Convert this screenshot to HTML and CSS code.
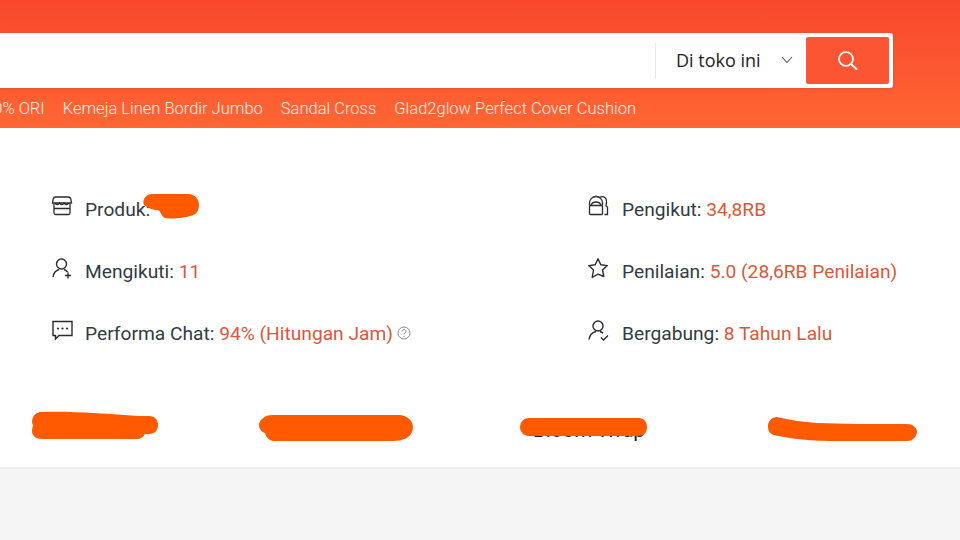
FILE: index.html
```html
<!DOCTYPE html>
<html lang="id">
<head>
<meta charset="utf-8">
<title>Toko</title>
<link rel="stylesheet" href="styles.css">
</head>
<body>
<header class="header">
  <div class="search">
    <div class="search-fill"></div>
    <div class="scope">
      <span class="scope-label">Di toko ini</span>
      <svg class="chev" width="12" height="8" viewBox="0 0 12 8"><path d="M1 1l5 5.500L11 1" fill="none" stroke="#555" stroke-width="1.100"/></svg>
    </div>
    <button class="search-btn" aria-label="Cari">
      <svg width="21" height="21" viewBox="0 0 21 21"><circle cx="9" cy="9" r="7" fill="none" stroke="#fff" stroke-width="1.700"/><path d="M14 14l5.500 5" stroke="#fff" stroke-width="1.800" stroke-linecap="round"/></svg>
    </button>
  </div>
  <nav class="suggest">
    <a class="first">100% ORI</a>
    <a>Kemeja Linen Bordir Jumbo</a>
    <a>Sandal Cross</a>
    <a>Glad2glow Perfect Cover Cushion</a>
  </nav>
</header>
<main class="panel">
  <section class="stats">
    <div class="stat">
      <svg class="ico" width="22" height="22" viewBox="0 0 22 22" fill="none" stroke="#2b2b2b" stroke-width="1.300"><path d="M4.500 2h13c1.500 0 2 .8 2.300 2l.7 4H1.500l.7-4c.3-1.200.8-2 2.300-2z"/><path d="M4 8c1 2 3.500 2 4.500 0 1 2 3.500 2 4.500 0 1 2 3.500 2 5 0"/><path d="M3 9v9c0 1 .5 1.500 1.500 1.500h13c1 0 1.500-.5 1.500-1.500V9M3 13.500h16"/></svg>
      <span>Produk:</span>
    </div>
    <div class="stat">
      <svg class="ico" width="22" height="22" viewBox="0 0 22 22" fill="none" stroke="#2b2b2b" stroke-width="1.300"><path d="M1.500 10.500V8a6.500 6.500 0 0 1 13 0v2.500"/><rect x="1.500" y="10.500" width="13" height="9" rx="1"/><path d="M3 10.500c.5-2 2.500-3.500 5-3.500s4.500 1.500 5 3.500"/><path d="M11.500 2.200c4.500-1.700 7.500 1 7 5l-.5 3.800 1.500 1v7.500h-3"/></svg>
      <span>Pengikut: <em>34,8RB</em></span>
    </div>
    <div class="stat">
      <svg class="ico" width="22" height="22" viewBox="0 0 22 22" fill="none" stroke="#2b2b2b" stroke-width="1.400"><circle cx="10.500" cy="7" r="5"/><path d="M2 20c.5-4 3-6.500 6-7.500M13 12.500c1.500.6 2.800 1.500 3.600 2.700"/><path d="M14 18.500h6M17 15.500v6"/></svg>
      <span>Mengikuti: <em>11</em></span>
    </div>
    <div class="stat">
      <svg class="ico" width="22" height="22" viewBox="0 0 22 22" fill="none" stroke="#2b2b2b" stroke-width="1.400"><path d="M10 1.800l2.800 6 6.500.8-4.800 4.400 1.300 6.500L10 17.200l-5.800 3.300L5.500 13 .7 8.600l6.500-.8z" stroke-linejoin="round"/></svg>
      <span>Penilaian: <em>5.0 (28,6RB Penilaian)</em></span>
    </div>
    <div class="stat">
      <svg class="ico" width="22" height="22" viewBox="0 0 22 22" fill="none" stroke="#2b2b2b" stroke-width="1.400"><path d="M2 2.500h19v14H8L4.500 20v-3.500H2z"/><circle cx="7" cy="9.500" r="1.100" fill="#2b2b2b" stroke="none"/><circle cx="11.500" cy="9.500" r="1.100" fill="#2b2b2b" stroke="none"/><circle cx="16" cy="9.500" r="1.100" fill="#2b2b2b" stroke="none"/></svg>
      <span>Performa Chat: <em>94% (Hitungan Jam)</em></span>
      <svg class="help" width="14" height="14" viewBox="0 0 14 14" fill="none" stroke="#8a8a8a" stroke-width="1"><circle cx="7" cy="7" r="6"/><path d="M5 5.500c0-2.500 4-2.500 4 0 0 1.500-2 1.500-2 3"/><circle cx="7" cy="10.300" r=".6" fill="#8a8a8a" stroke="none"/></svg>
    </div>
    <div class="stat">
      <svg class="ico" width="22" height="22" viewBox="0 0 22 22" fill="none" stroke="#2b2b2b" stroke-width="1.400"><circle cx="10" cy="7" r="5"/><path d="M1 20.500c.5-4 3-7 7-8M12 12.500c1.200.4 2.200 1 3 1.800"/><path d="M13 18.500l2.500 2.500 4.500-4.500"/></svg>
      <span>Bergabung: <em>8 Tahun Lalu</em></span>
    </div>
  </section>
  <section class="tabs">
    <span class="tab tab-a"></span>
    <span class="tab tab-b"></span>
    <span class="tab tab-c">Bloom Wrap</span>
    <span class="tab tab-d"></span>
  </section>
</main>
<div class="page-rest"></div>
<svg class="scribbles" width="960" height="540" viewBox="0 0 960 540" fill="#ff5a00" aria-hidden="true">
  <path d="M152 194h36c7 0 11 5 11 11 0 6-3 10-9 11-6 2-22 4-27 1-2-3-3-6-5-7-6 0-9-2-14-5-2-4 1-11 8-11z"/>
  <path d="M42 412c30-1 65 2 96 4h11c6 0 9 4 9 9s-3 9-9 9h-4c-2 3-4 5-9 5H42c-6 0-10-3-10-8 0-3 1-4 1-6-2-3-1-13 9-13z"/>
  <path d="M272 415h127c8 0 14 6 14 12 0 4-2 8-5 10-4 3-10 4-18 4H274c-5 0-8-4-9-8-4-1-6-5-6-8 0-5 6-10 13-10z"/>
  <path d="M529 418h110c5 0 8 4 8 9s-3 9-8 9H529c-5 0-9-4-9-9s4-9 9-9z"/>
  <path d="M777 417c12 3 25 5 40 6 25 1 55 1 90 1 6 0 10 4 10 8s-4 9-10 9h-70c-20 0-40-1-58-5-10-1-11-5-11-10 0-5 4-9 9-9z"/>
</svg>
</body>
</html>
```

FILE: styles.css
```css
* { box-sizing: border-box; }
html, body { margin: 0; padding: 0; }
body {
  position: relative;
  width: 960px;
  height: 540px;
  overflow: hidden;
  background: #f5f5f5;
  font-family: Roboto, "Liberation Sans", sans-serif;
}
.header {
  height: 128px;
  padding-top: 33px;
  background: linear-gradient(180deg, #f9482e, #ff6633);
  overflow: hidden;
}
.search {
  display: flex;
  align-items: center;
  width: 893px;
  height: 55px;
  padding-right: 4px;
  background: #fff;
  border-radius: 0 3px 3px 0;
  box-shadow: 0 1px 3px rgba(0, 0, 0, .1);
}
.search-fill { flex: 1; }
.scope {
  display: flex;
  align-items: center;
  width: 151px;
  height: 36px;
  padding-left: 20px;
  border-left: 1px solid #e8e8e8;
}
.scope-label {
  margin-top: -2px;
  font-family: "Open Sans", sans-serif;
  font-size: 18px;
  color: #222;
}
.chev { margin-left: 20px; margin-top: -1px; }
.search-btn {
  display: flex;
  align-items: center;
  justify-content: center;
  width: 83px;
  height: 47px;
  padding: 0;
  border: 0;
  border-radius: 2px;
  background: #fb5533;
}
.suggest {
  display: flex;
  gap: 18px;
  margin-top: 8px;
  margin-left: -25px;
  padding-top: 1px;
  font-size: 16.5px;
  font-weight: 300;
  line-height: 24px;
  white-space: nowrap;
  color: #fff0e8;
}
.panel {
  height: 341px;
  padding-top: 50px;
  background: #fff;
  border-bottom: 2px solid #ececec;
}
.stats {
  display: grid;
  grid-template-columns: 537px 1fr;
  padding-left: 51px;
}
.stat {
  display: flex;
  align-items: center;
  height: 62px;
  font-size: 19.2px;
  color: #333a40;
}
.stat em { font-style: normal; color: #d9583b; }
.ico { flex: none; margin-right: 12px; margin-top: -6px; }
.help { margin-left: 4px; }
.tabs {
  display: grid;
  grid-template-columns: 245px 245px 250px 1fr;
  margin-top: 46px;
  height: 40px;
  font-size: 20.6px;
}
.tab { color: #222; line-height: 40px; }
.tab-c { padding-left: 43px; }
.page-rest { height: 70px; }
.scribbles { position: absolute; left: 0; top: 0; pointer-events: none; }
```
